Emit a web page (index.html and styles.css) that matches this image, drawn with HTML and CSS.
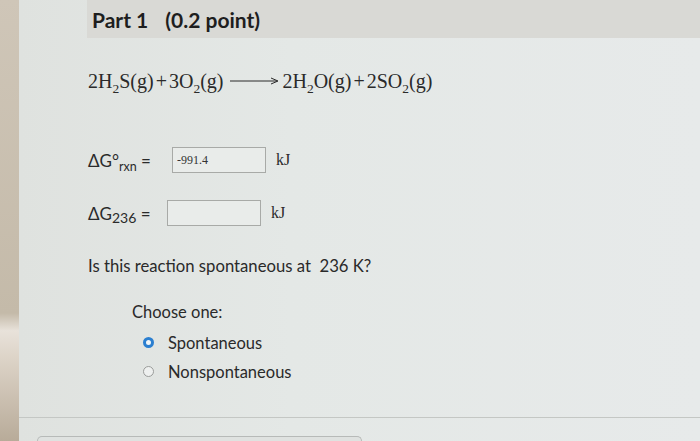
FILE: index.html
```html
<!DOCTYPE html>
<html lang="en">
<head>
    <meta charset="UTF-8">
    <title>Part 1</title>
    <link rel="stylesheet" href="styles.css">
</head>
<body>
    <div class="bezel"></div>
    <div class="screen">
        <div class="part-header">
            <span class="part-title">Part 1</span>
            <span class="part-points">(0.2 point)</span>
        </div>

        <div class="question">
            <div class="equation">2H<sub>2</sub>S(g)<span class="op">+</span>3O<sub>2</sub>(g)<svg class="arrow" width="50" height="10" viewBox="0 0 50 10">
                    <line x1="1" y1="5" x2="48" y2="5" stroke="#2a2a2a" stroke-width="1"/>
                    <path d="M42 2 L49 5 L42 8" fill="none" stroke="#2a2a2a" stroke-width="1"/>
                </svg>2H<sub>2</sub>O(g)<span class="op">+</span>2SO<sub>2</sub>(g)</div>

            <div class="answer-row first">
                <span class="label">ΔG°<sub>rxn</sub> =</span>
                <input type="text" class="answer-box" value="-991.4">
                <span class="unit">kJ</span>
            </div>
            <div class="answer-row second">
                <span class="label">ΔG<sub class="temp">236</sub> =</span>
                <input type="text" class="answer-box" value="">
                <span class="unit">kJ</span>
            </div>

            <p class="prompt">Is this reaction spontaneous at &nbsp;236 K?</p>

            <div class="choices">
                <div class="choose-label">Choose one:</div>
                <label class="choice"><span class="radio checked"></span>Spontaneous</label>
                <label class="choice"><span class="radio"></span>Nonspontaneous</label>
            </div>
        </div>

        <div class="footer">
            <div class="footer-box"></div>
        </div>
    </div>
</body>
</html>
```

FILE: styles.css
```css
body {
    margin: 0;
    height: 441px;
    overflow: hidden;
    display: flex;
    background-color: #e3e6e4;
    color: #2a2a2a;
    font-family: Lato, "Open Sans", sans-serif;
}
.bezel {
    width: 19px;
    flex-shrink: 0;
    background: linear-gradient(to bottom, #cfc6b8 0%, #c4baa9 71%, #e8e2da 75%, #ddd4c8 81%, #b8ab99 100%);
}
.screen {
    flex: 1;
    display: flex;
    flex-direction: column;
    background: linear-gradient(to right, #dfe2df 0%, #e4e8e6 40%, #e7eaea 100%);
}
.part-header {
    margin-left: 68px;
    height: 38px;
    padding-left: 5px;
    display: flex;
    align-items: center;
    background-color: #d9d9d5;
    font-weight: bold;
    font-size: 21px;
    color: #1e1e1e;
}
.part-title {
    margin-right: 17px;
}
.question {
    flex: 1;
    padding-left: 69px;
}
.equation {
    margin-top: 29px;
    height: 28px;
    line-height: 28px;
    font-family: "Liberation Serif", "Times New Roman", serif;
    font-size: 20px;
    white-space: nowrap;
}
.equation sub {
    font-size: 13.5px;
    vertical-align: -5px;
    line-height: 0;
}
.equation .op {
    margin: 0 2px;
}
.arrow {
    margin: 0 3px 0 6px;
    vertical-align: 2px;
}
.answer-row {
    display: flex;
    align-items: center;
    height: 26px;
}
.answer-row.first {
    margin-top: 52px;
}
.answer-row.second {
    margin-top: 27px;
}
.label {
    font-size: 17px;
    width: 84px;
    white-space: nowrap;
}
.label sub {
    font-size: 12.5px;
    vertical-align: -4px;
    line-height: 0;
}
.label sub.temp {
    font-size: 14px;
    vertical-align: -3px;
}
.answer-row.second .label {
    width: 79px;
}
.answer-box {
    width: 94px;
    height: 26px;
    box-sizing: border-box;
    border: 1px solid #a8aaa7;
    background-color: #e9ecea;
    padding: 0 4px;
    font-family: "Liberation Serif", serif;
    font-size: 12px;
    color: #333;
}
.unit {
    margin-left: 10px;
    font-family: "Liberation Serif", serif;
    font-size: 16px;
}
.prompt {
    margin: 30px 0 0 0;
    font-size: 16.7px;
}
.choices {
    margin-top: 26px;
    padding-left: 44px;
}
.choose-label {
    font-size: 16.5px;
    margin-bottom: 6px;
}
.choice {
    display: flex;
    align-items: center;
    height: 29px;
    font-size: 16.5px;
    padding-left: 11px;
}
.radio {
    width: 9px;
    height: 9px;
    border: 1px solid #9a9c9a;
    border-radius: 50%;
    margin-right: 14px;
    box-sizing: content-box;
    background-color: #eef0ef;
}
.radio.checked {
    width: 5px;
    height: 5px;
    border: 3px solid #2b7fd0;
    background-color: #f2f6f8;
}
.footer {
    height: 23px;
    border-top: 1px solid #c4c7c4;
    padding-left: 18px;
    display: flex;
    align-items: flex-end;
}
.footer-box {
    width: 323px;
    height: 4px;
    border: 1px solid #b7bab8;
    border-bottom: none;
    border-radius: 6px 6px 0 0;
    background-color: #dfe2e0;
}
```
